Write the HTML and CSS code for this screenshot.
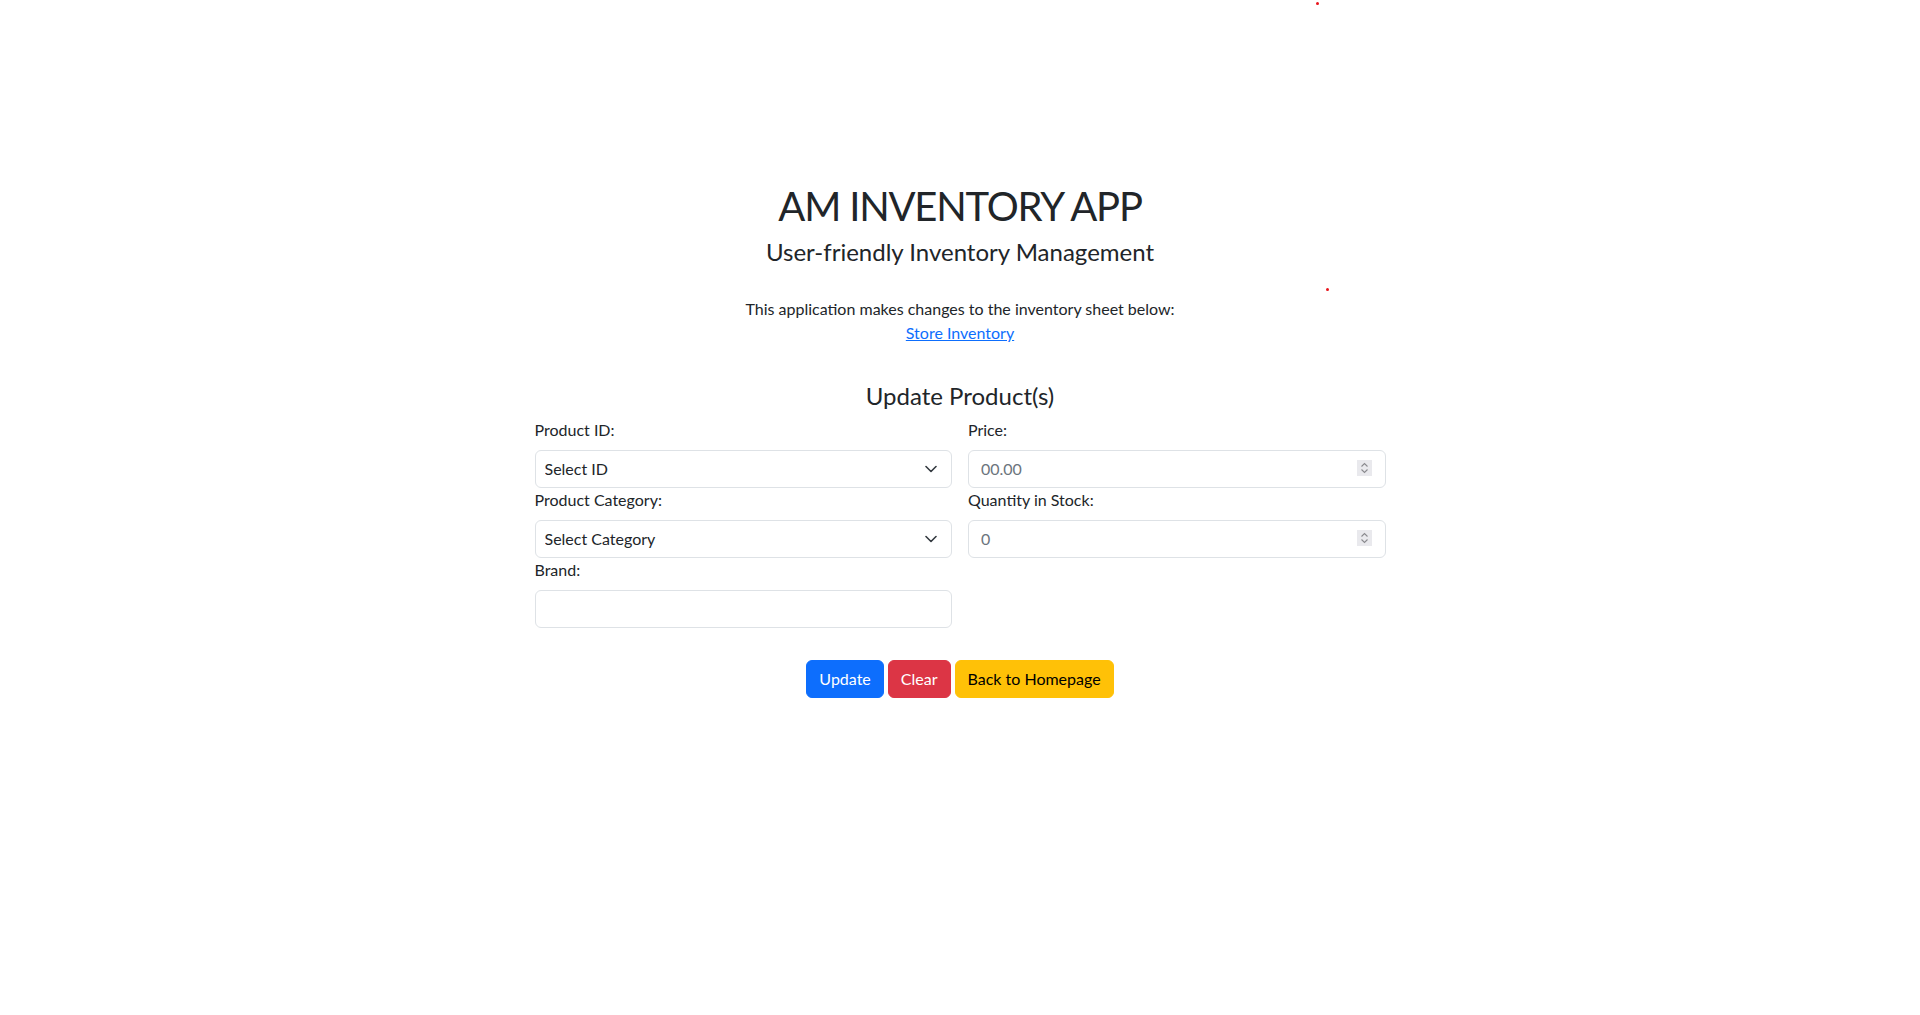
FILE: index.html
```html
<!DOCTYPE html>
<html lang="en">
<head>
<meta charset="utf-8">
<title>AM Inventory App</title>
<link rel="stylesheet" href="styles.css">
</head>
<body>
<span class="dot dot-a"></span>
<span class="dot dot-b"></span>
<main class="page">
  <header class="hero">
    <h1 class="title">AM INVENTORY APP</h1>
    <h4 class="subtitle">User-friendly Inventory Management</h4>
    <p class="intro">This application makes changes to the inventory sheet below:<br><a href="#" class="link">Store Inventory</a></p>
  </header>
  <form class="update-form">
    <h4 class="form-title">Update Product(s)</h4>
    <div class="grid">
      <div class="field">
        <label class="label">Product ID:</label>
        <div class="control-wrap">
          <select class="control select"><option>Select ID</option></select>
          <svg class="chev" viewBox="0 0 12 8" width="12" height="8"><path d="M1 1.5 6 6.5 11 1.5" fill="none" stroke="#343a40" stroke-width="1.6" stroke-linecap="round" stroke-linejoin="round"/></svg>
        </div>
      </div>
      <div class="field">
        <label class="label">Price:</label>
        <div class="control-wrap">
          <input class="control number" type="text" placeholder="00.00">
          <span class="spin"><svg viewBox="0 0 15 16" width="15" height="16"><path d="M4.5 6.5 7.5 3.5 10.5 6.5M4.5 9.5 7.5 12.5 10.5 9.5" fill="none" stroke="#8a8a8e" stroke-width="1.1"/></svg></span>
        </div>
      </div>
      <div class="field">
        <label class="label">Product Category:</label>
        <div class="control-wrap">
          <select class="control select"><option>Select Category</option></select>
          <svg class="chev" viewBox="0 0 12 8" width="12" height="8"><path d="M1 1.5 6 6.5 11 1.5" fill="none" stroke="#343a40" stroke-width="1.6" stroke-linecap="round" stroke-linejoin="round"/></svg>
        </div>
      </div>
      <div class="field">
        <label class="label">Quantity in Stock:</label>
        <div class="control-wrap">
          <input class="control number" type="text" placeholder="0">
          <span class="spin"><svg viewBox="0 0 15 16" width="15" height="16"><path d="M4.5 6.5 7.5 3.5 10.5 6.5M4.5 9.5 7.5 12.5 10.5 9.5" fill="none" stroke="#8a8a8e" stroke-width="1.1"/></svg></span>
        </div>
      </div>
      <div class="field">
        <label class="label">Brand:</label>
        <div class="control-wrap">
          <input class="control" type="text">
        </div>
      </div>
    </div>
    <div class="actions">
      <button type="button" class="btn btn-primary">Update</button>
      <button type="button" class="btn btn-danger">Clear</button>
      <button type="button" class="btn btn-warning">Back to Homepage</button>
    </div>
  </form>
</main>
</body>
</html>
```
FILE: styles.css
```css
* { box-sizing: border-box; }
html, body { margin: 0; background: #fff; }
body {
  font-family: Lato, "Open Sans", "Noto Sans", sans-serif;
  font-size: 16px;
  line-height: 1.5;
  color: #212529;
  position: relative;
  min-height: 1015px;
}
.dot {
  position: absolute;
  width: 3px;
  height: 3px;
  border-radius: 50%;
  background: #e8141b;
}
.dot-a { left: 1316px; top: 2px; }
.dot-b { left: 1326px; top: 288px; }

.page {
  padding-top: 182px;
}
.hero { text-align: center; }
.title {
  font-size: 40px;
  font-weight: 400;
  line-height: 1.2;
  letter-spacing: -1.2px;
  margin: 0 0 8px;
}
.subtitle {
  font-size: 24px;
  font-weight: 400;
  line-height: 1.2;
  margin: 0;
}
.intro {
  margin: 30px 0 0;
}
.link { color: #0d6efd; text-decoration: underline; }

.update-form {
  width: 851px;
  margin: 0 auto;
}
.form-title {
  font-size: 24px;
  font-weight: 400;
  line-height: 1.2;
  text-align: center;
  margin: 37px 0 7px;
}
.grid {
  display: grid;
  grid-template-columns: 1fr 1fr;
  column-gap: 16px;
}
.label {
  display: block;
  line-height: 24px;
  margin-bottom: 8px;
}
.control-wrap { position: relative; }
.control {
  display: block;
  width: 100%;
  height: 38px;
  padding: 6px 12px;
  font: inherit;
  font-size: 16px;
  line-height: 24px;
  color: #212529;
  background: #fff;
  border: 1px solid #dee2e6;
  border-radius: 6px;
  outline: none;
  -webkit-appearance: none;
  appearance: none;
}
.control::placeholder { color: #6c757d; opacity: 1; }
.select { padding-left: 9px; padding-right: 36px; }
.chev {
  position: absolute;
  right: 15px;
  top: 15px;
  pointer-events: none;
}
.spin {
  position: absolute;
  right: 14px;
  top: 10px;
  width: 15px;
  height: 16px;
  background: #e9e9ed;
  display: flex;
}

.actions {
  display: flex;
  justify-content: center;
  gap: 4px;
  margin-top: 32px;
}
.btn {
  font: inherit;
  font-size: 16px;
  line-height: 24px;
  padding: 6px 12px;
  border: 1px solid transparent;
  border-radius: 6px;
  cursor: pointer;
}
.btn-primary { background: #0d6efd; border-color: #0d6efd; color: #fff; }
.btn-danger { background: #dc3545; border-color: #dc3545; color: #fff; }
.btn-warning { background: #ffc107; border-color: #ffc107; color: #000; }
```
